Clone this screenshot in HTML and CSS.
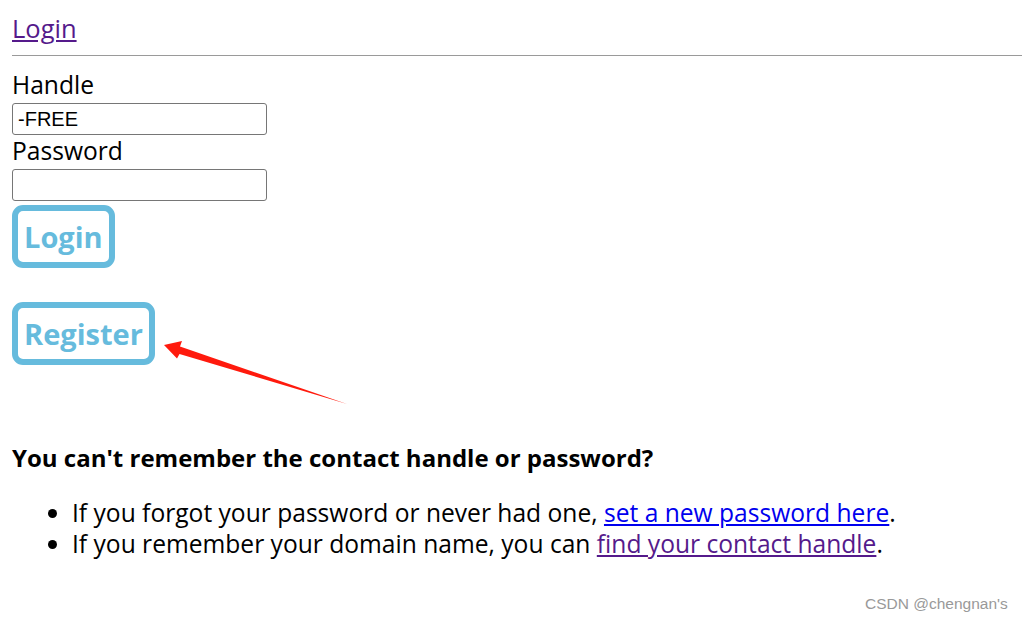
FILE: index.html
```html
<!DOCTYPE html>
<html lang="en">
<head>
<meta charset="utf-8">
<title>Login</title>
<link rel="stylesheet" href="styles.css">
</head>
<body>
<div class="page">
  <a class="top-link" href="#">Login</a>
  <hr class="rule">
  <form class="login-form">
    <label class="field-label" for="handle">Handle</label>
    <input class="field-input" id="handle" type="text" value="-FREE">
    <label class="field-label" for="password">Password</label>
    <input class="field-input" id="password" type="password">
    <div class="btn-row"><button class="btn" type="button">Login</button></div>
    <div class="btn-row btn-row-reg"><button class="btn" type="button">Register</button></div>
  </form>
  <h3 class="help-title">You can't remember the contact handle or password?</h3>
  <ul class="help-list">
    <li>If you forgot your password or never had one, <a class="link-new" href="#">set a new password here</a>.</li>
    <li>If you remember your domain name, you can <a class="link-visited" href="#">find your contact handle</a>.</li>
  </ul>
  <div class="watermark">CSDN @chengnan's</div>
  <svg class="arrow" width="200" height="80" viewBox="0 0 200 80">
    <path d="M6 11 L24 7 L22 12.5 L189 70 L21.5 20 L19 24.5 Z" fill="#ff1a0d"/>
  </svg>
</div>
</body>
</html>
```
FILE: styles.css
```css
html, body {
  margin: 0;
  padding: 0;
  background: #fff;
}
body {
  font-family: "Open Sans", "Noto Sans", sans-serif;
  font-size: 24.6px;
  line-height: 31px;
  color: #000;
}
.page {
  position: relative;
  width: 1022px;
  height: 622px;
  padding: 12px 0 0 12px;
  box-sizing: border-box;
}
.top-link {
  display: block;
  color: #551a8b;
  text-decoration: underline;
  font-size: 25.5px;
  line-height: 32px;
  width: max-content;
}
.rule {
  border: 0;
  border-top: 1px solid #9a9a9a;
  height: 0;
  margin: 11px 0 0 0;
}
.login-form {
  display: flex;
  flex-direction: column;
  align-items: flex-start;
  margin-top: 13px;
}
.field-label {
  line-height: 32px;
}
.field-input {
  width: 255px;
  height: 32px;
  box-sizing: border-box;
  border: 1px solid #767676;
  border-radius: 3px;
  font-family: "Liberation Sans", Arial, sans-serif;
  font-size: 20px;
  padding: 0 5px;
  margin: 2px 0 0 0;
}
.btn-row {
  margin-top: 4px;
}
.btn-row-reg {
  margin-top: 34px;
}
.btn {
  background: #fff;
  border: 6px solid #66bbdd;
  border-radius: 11px;
  color: #66bbdd;
  font-family: "Open Sans", "Noto Sans", sans-serif;
  font-weight: 700;
  font-size: 29px;
  line-height: 37px;
  padding: 7px 6px;
  cursor: pointer;
}
.help-title {
  font-size: 24px;
  font-weight: 700;
  margin: 77px 0 0 0;
  line-height: 31px;
}
.help-list {
  margin: 24px 0 0 0;
  padding-left: 60px;
}
.help-list li {
  line-height: 31px;
}
.link-new {
  color: #0000ee;
}
.link-visited {
  color: #551a8b;
}
.watermark {
  position: absolute;
  left: 865px;
  top: 593px;
  font-family: "Liberation Sans", Arial, sans-serif;
  font-size: 15.5px;
  line-height: 22px;
  color: #999;
}
.arrow {
  position: absolute;
  left: 158px;
  top: 334px;
}
```
